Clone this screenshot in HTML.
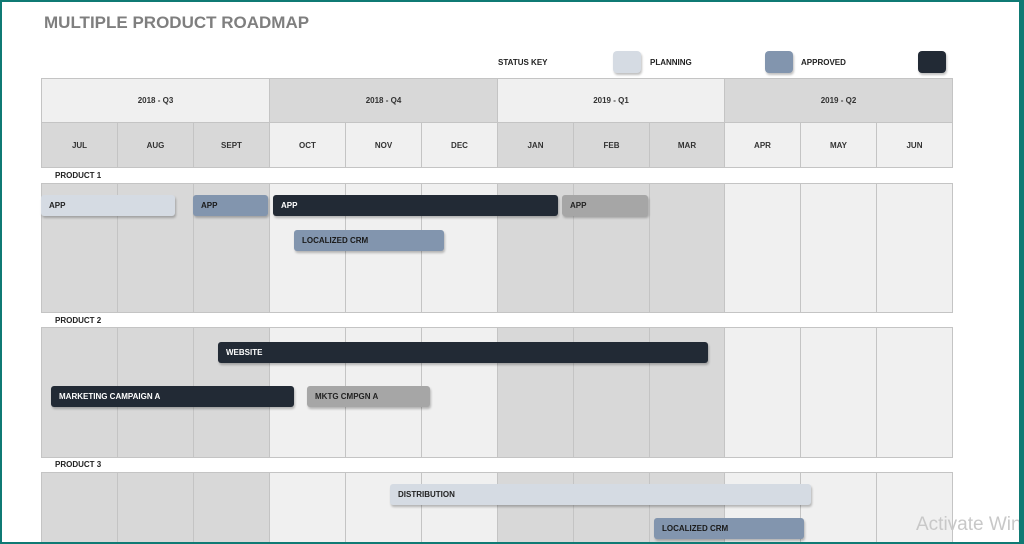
<!DOCTYPE html>
<html><head><style>
*{margin:0;padding:0;box-sizing:border-box}
html,body{width:1024px;height:544px;overflow:hidden}
body{background:#fff;font-family:"Liberation Sans",sans-serif;position:relative}
.frame{position:absolute;left:0;top:0;width:1024px;height:544px;border:2px solid #0f7a74;border-right:5px solid #0f7a74;pointer-events:none;z-index:10}
.t{position:absolute;left:44px;top:13px;font-size:17px;font-weight:bold;color:#7f7f7f}
.a{position:absolute}
.lbl{position:absolute;font-size:8px;font-weight:bold;color:#222}
.cell{position:absolute;border:1px solid #c4c4c4;display:flex;align-items:center;justify-content:center;font-size:8px;font-weight:bold;color:#333}
.g{background:#d8d8d8}.l{background:#f0f0f0}
.bar{position:absolute;height:21px;border-radius:3px;font-size:8px;font-weight:bold;padding-left:8px;line-height:21px;box-shadow:1px 2px 2px rgba(0,0,0,.25)}
.pl{background:#d5dbe3;color:#222}.ap{background:#8295ae;color:#1a1a1a}.dk{background:#222a35;color:#fff}.gr{background:#a6a6a6;color:#222}
.sw{position:absolute;top:51px;width:28px;height:22px;border-radius:4px;box-shadow:1px 2px 2px rgba(0,0,0,.25)}
</style></head><body>
<div class="frame"></div>
<div class="t">MULTIPLE PRODUCT ROADMAP</div>
<div class="lbl" style="left:498px;top:58px">STATUS KEY</div>
<div class="sw pl" style="left:613px"></div>
<div class="lbl" style="left:650px;top:58px">PLANNING</div>
<div class="sw ap" style="left:765px"></div>
<div class="lbl" style="left:801px;top:58px">APPROVED</div>
<div class="sw dk" style="left:918px"></div>
<div id="grid"></div>
<div class="lbl" style="left:55px;top:171px">PRODUCT 1</div>
<div class="lbl" style="left:55px;top:316px">PRODUCT 2</div>
<div class="lbl" style="left:55px;top:460px">PRODUCT 3</div>
<div class="bar pl" style="left:41px;top:195px;width:134px">APP</div>
<div class="bar ap" style="left:193px;top:195px;width:75px">APP</div>
<div class="bar dk" style="left:273px;top:195px;width:285px">APP</div>
<div class="bar gr" style="left:562px;top:195px;width:86px">APP</div>
<div class="bar ap" style="left:294px;top:230px;width:150px">LOCALIZED CRM</div>
<div class="bar dk" style="left:218px;top:342px;width:490px">WEBSITE</div>
<div class="bar dk" style="left:51px;top:386px;width:243px">MARKETING CAMPAIGN A</div>
<div class="bar gr" style="left:307px;top:386px;width:123px">MKTG CMPGN A</div>
<div class="bar pl" style="left:390px;top:484px;width:421px">DISTRIBUTION</div>
<div class="bar ap" style="left:654px;top:518px;width:150px">LOCALIZED CRM</div>
<div class="a" style="left:916px;top:514px;font-size:19px;color:#c8c8c8;white-space:nowrap">Activate Windows</div>
<script>
var g=document.getElementById('grid'),h='';
var xs=[41,117,193,269,345,421,497,573,649,724,800,876,952];
var m=['JUL','AUG','SEPT','OCT','NOV','DEC','JAN','FEB','MAR','APR','MAY','JUN'];
var q=['2018 - Q3','2018 - Q4','2019 - Q1','2019 - Q2'];
for(var i=0;i<4;i++){h+='<div class="cell '+(i%2?'g':'l')+'" style="left:'+xs[i*3]+'px;top:78px;width:'+(xs[i*3+3]-xs[i*3]+1)+'px;height:45px">'+q[i]+'</div>';}
for(var i=0;i<12;i++){var c=(Math.floor(i/3)%2)?'l':'g';var w=xs[i+1]-xs[i]+1;
h+='<div class="cell '+c+'" style="left:'+xs[i]+'px;top:122px;width:'+w+'px;height:46px">'+m[i]+'</div>';
[[183,130],[327,131],[472,80]].forEach(function(r){h+='<div class="cell '+c+'" style="left:'+xs[i]+'px;top:'+r[0]+'px;width:'+w+'px;height:'+r[1]+'px"></div>';});}
g.innerHTML=h;
</script>
</body></html>
